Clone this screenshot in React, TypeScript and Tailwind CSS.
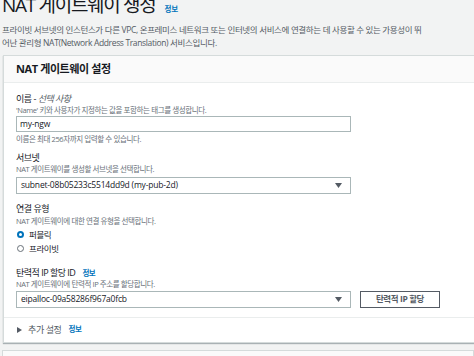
import React from 'react';

const font = { fontFamily: '"Open Sans", "Noto Sans CJK KR", sans-serif' };

function Info() {
  return <span className="ml-[7px] text-[7.5px] font-bold text-[#0073bb]">정보</span>;
}

function Caret() {
  return (
    <svg width="7" height="5" viewBox="0 0 7 5" className="shrink-0">
      <path d="M0 0 L7 0 L3.5 5 Z" fill="#545b64" />
    </svg>
  );
}

function Label({ children }: { children: React.ReactNode }) {
  return <div className="flex items-baseline text-[9px] leading-[12px] tracking-[-0.5px] text-[#16191f]">{children}</div>;
}

function Help({ children }: { children: React.ReactNode }) {
  return <div className="text-[7.5px] leading-[10px] tracking-[-0.4px] text-[#687078]">{children}</div>;
}

export default function App() {
  return (
    <div className="h-[356px] w-[474px] overflow-hidden bg-[#f2f3f3]" style={font}>
      <div className="pl-[2px]">
        <h1 className="mt-[-6px] flex items-baseline text-[19px] leading-[22px] font-normal tracking-[-1.3px] text-[#16191f]">
          NAT 게이트웨이 생성
          <span className="ml-[9px] text-[7.5px] font-bold tracking-normal text-[#0073bb]">정보</span>
        </h1>
        <p className="mt-[3px] text-[8.5px] leading-[13px] tracking-[-0.35px] whitespace-nowrap text-[#545b64]">
          프라이빗 서브넷의 인스턴스가 다른 VPC, 온프레미스 네트워크 또는 인터넷의 서비스에 연결하는 데 사용할 수 있는 가용성이 뛰
          <br />
          어난 관리형 NAT(Network Address Translation) 서비스입니다.
        </p>
      </div>

      <section className="mt-[6px] ml-[3px] w-[472px] border border-[#d5dbdb] bg-white shadow-[0_1px_1px_rgba(0,28,36,0.3)]">
        <div className="flex h-[27px] items-center border-b border-[#eaeded] bg-[#fafafa] px-[12px] text-[11px] font-bold tracking-[-0.4px] text-[#16191f]">
          NAT 게이트웨이 설정
        </div>

        <div className="px-[12px] pt-[10px]">
          <Label>
            이름 -&nbsp;<i className="text-[#545b64]">선택 사항</i>
          </Label>
          <Help>'Name' 키와 사용자가 지정하는 값을 포함하는 태그를 생성합니다.</Help>
          <div className="mt-[1px] flex h-[16px] w-[335px] items-center border border-[#aab7b8] px-[3px] text-[8.5px] tracking-[-0.2px] text-[#16191f]">
            my-ngw
          </div>
          <div className="mt-[2px] text-[7.5px] leading-[10px] tracking-[-0.4px] text-[#687078]">이름은 최대 256자까지 입력할 수 있습니다.</div>

          <div className="mt-[8px]">
            <Label>서브넷</Label>
            <Help>NAT 게이트웨이를 생성할 서브넷을 선택합니다.</Help>
            <div className="mt-[3px] flex h-[17px] w-[335px] items-center justify-between border border-[#aab7b8] pl-[4px] pr-[8px] text-[8.5px] tracking-[-0.2px] text-[#16191f]">
              subnet-08b05233c5514dd9d (my-pub-2d)
              <Caret />
            </div>
          </div>

          <div className="mt-[9px]">
            <Label>연결 유형</Label>
            <div className="mt-[1px]">
              <Help>NAT 게이트웨이에 대한 연결 유형을 선택합니다.</Help>
            </div>
            <div className="mt-[2px] flex flex-col gap-[1px] text-[8.5px] leading-[13px] tracking-[-0.4px] text-[#16191f]">
              <label className="flex items-center gap-[5px] pl-[1px]">
                <span className="h-[7px] w-[7px] rounded-full border-[2px] border-[#0073bb] bg-white" />
                퍼블릭
              </label>
              <label className="flex items-center gap-[5px] pl-[1px]">
                <span className="h-[7px] w-[7px] rounded-full border border-[#687078] bg-white" />
                프라이빗
              </label>
            </div>
          </div>

          <div className="mt-[12px]">
            <Label>
              탄력적 IP 할당 ID
              <Info />
            </Label>
            <Help>NAT 게이트웨이에 탄력적 IP 주소를 할당합니다.</Help>
            <div className="mt-[2px] flex items-center gap-[9px]">
              <div className="flex h-[17px] w-[335px] items-center justify-between border border-[#aab7b8] pl-[4px] pr-[8px] text-[8.5px] tracking-[-0.2px] text-[#16191f]">
                eipalloc-09a58286f967a0fcb
                <Caret />
              </div>
              <button className="flex h-[17px] w-[80px] items-center justify-center border border-[#545b64] bg-white text-[8.5px] font-bold tracking-[-0.4px] text-[#545b64]">
                탄력적 IP 할당
              </button>
            </div>
          </div>
        </div>

        <div className="mt-[9px] flex h-[25px] items-center border-t border-[#eaeded] px-[13px] text-[9px] tracking-[-0.4px] text-[#545b64]">
          <svg width="5" height="6" viewBox="0 0 5 6" className="mr-[6px]">
            <path d="M0 0 L5 3 L0 6 Z" fill="#545b64" />
          </svg>
          추가 설정
          <Info />
        </div>
      </section>

      <section className="mt-[7px] ml-[2px] h-[20px] w-[472px] border border-[#d5dbdb] bg-[#fafafa]" />
    </div>
  );
}
